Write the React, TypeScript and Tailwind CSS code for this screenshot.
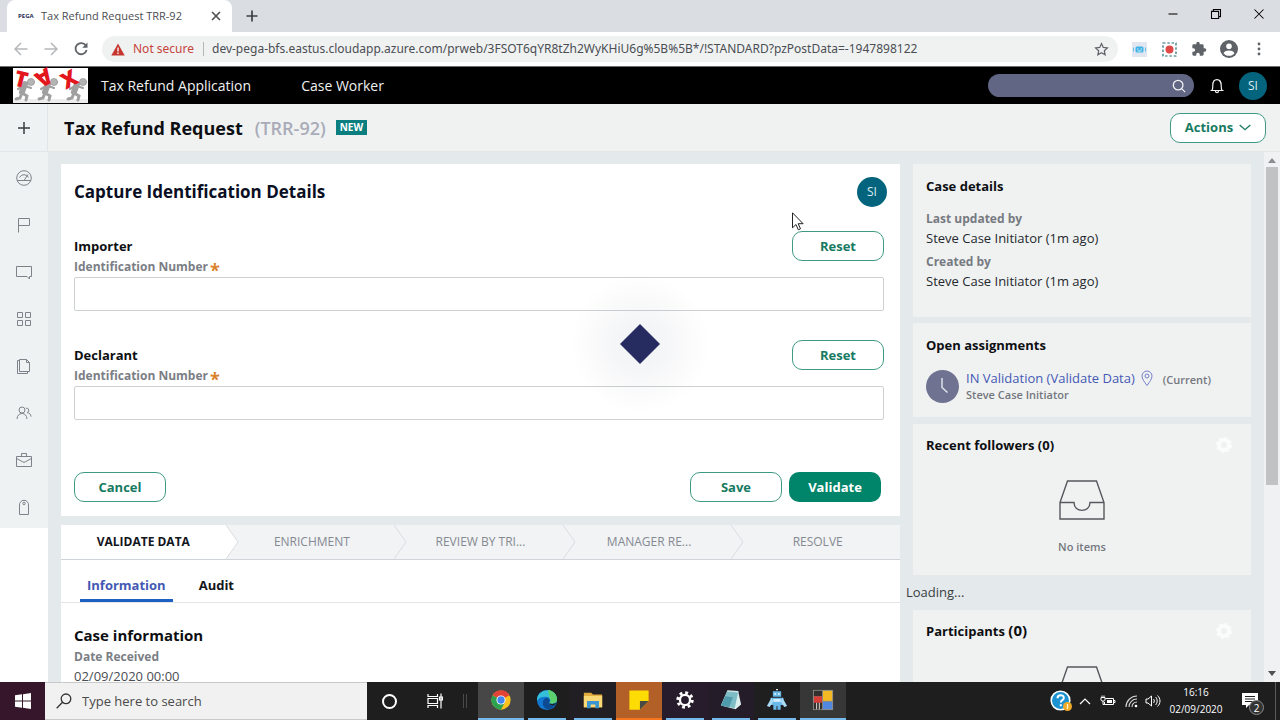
import { useState } from "react";
import type { ReactNode } from "react";

const outlineButton =
  "h-[30px] w-[92px] rounded-[10px] border border-[#3f9a83] bg-white text-[13px] font-bold text-[#177a62]";

interface IconProps {
  size?: number;
  className?: string;
  children: ReactNode;
}

function LineIcon({ size = 16, className, children }: IconProps) {
  return (
    <svg
      width={size}
      height={size}
      viewBox="0 0 16 16"
      fill="none"
      stroke="currentColor"
      strokeWidth="1"
      className={className}
      aria-hidden="true"
    >
      {children}
    </svg>
  );
}

function TabStrip() {
  return (
    <div className="flex h-8 shrink-0 bg-[#dadde2] pl-[7px]">
      <div className="flex w-[225px] items-center rounded-t-lg bg-white pr-2 pl-[11px] text-[#4a4d51]">
        <span className="w-[23px] text-[6px] font-bold text-[#2a2a55]">PEGA</span>
        <span className="flex-1 text-[11px] whitespace-nowrap">Tax Refund Request TRR-92</span>
        <button type="button" aria-label="Close tab" className="flex size-4 items-center justify-center">
          <LineIcon size={14}>
            <path d="M3.5 3.5l9 9M12.500 3.500l-9 9" strokeWidth="1.8" />
          </LineIcon>
        </button>
      </div>
      <button type="button" aria-label="New tab" className="flex w-10 items-center justify-center text-[#3c4043]">
        <LineIcon size={16}>
          <path d="M8 2.500v11M2.500 8h11" strokeWidth="1.7" />
        </LineIcon>
      </button>
      <div className="ml-auto flex pb-1 text-black">
        <button type="button" aria-label="Minimize" className="flex w-[43px] items-center justify-center">
          <LineIcon size={12}>
            <path d="M2 8h12" strokeWidth="1.400" />
          </LineIcon>
        </button>
        <button type="button" aria-label="Restore" className="flex w-[43px] items-center justify-center">
          <LineIcon size={12}>
            <path d="M2 4.500h9.500V14H2zM4.500 4.500V2H14v9.500h-2.500" strokeWidth="1.400" />
          </LineIcon>
        </button>
        <button type="button" aria-label="Close" className="flex w-[43px] items-center justify-center">
          <LineIcon size={12}>
            <path d="M2 2l12 12M14 2L2 14" strokeWidth="1.400" />
          </LineIcon>
        </button>
      </div>
    </div>
  );
}

function AddressBar() {
  return (
    <div className="flex h-[34px] shrink-0 items-center bg-white pr-[6px] pl-[6px] text-[#5f6368]">
      <button type="button" aria-label="Back" className="flex w-[30px] justify-center text-[#b5b8bb]">
        <LineIcon size={16}>
          <path d="M14.500 8H2M8 2L2 8l6 6" strokeWidth="1.500" />
        </LineIcon>
      </button>
      <button type="button" aria-label="Forward" className="flex w-[30px] justify-center text-[#b5b8bb]">
        <LineIcon size={16}>
          <path d="M1.500 8H14M8 2l6 6-6 6" strokeWidth="1.500" />
        </LineIcon>
      </button>
      <button type="button" aria-label="Reload" className="flex w-[30px] justify-center">
        <LineIcon size={16}>
          <path d="M12.800 4.500A5.600 5.600 0 1 0 13.600 9" strokeWidth="1.800" />
          <path d="M14.500 1.500v5.200H9.300z" fill="currentColor" stroke="none" />
        </LineIcon>
      </button>
      <div className="ml-[6px] flex h-[26px] flex-1 items-center rounded-full bg-[#f0f2f2] pr-[9px] pl-[9px] font-['Noto_Sans',sans-serif] text-[12px]">
        <svg width="14" height="13" viewBox="0 0 14 13" aria-hidden="true">
          <path d="M7 .5L13.700 12.500H.3z" fill="#c5362f" />
          <path d="M7 4.500v4M7 9.600v1.500" stroke="#fff" strokeWidth="1.300" />
        </svg>
        <span className="ml-2 w-[62px] whitespace-nowrap text-[#c5443d]">Not secure</span>
        <span className="mx-[8px] h-[14px] w-px bg-[#b4b7ba]" />
        <input
          aria-label="Address"
          className="min-w-0 flex-1 bg-transparent text-[#4b4e52] outline-none"
          defaultValue="dev-pega-bfs.eastus.cloudapp.azure.com/prweb/3FSOT6qYR8tZh2WyKHiU6g%5B%5B*/!STANDARD?pzPostData=-1947898122"
        />
        <button type="button" aria-label="Bookmark this page">
          <LineIcon size={15}>
            <path d="M8 1.700l1.900 4.100 4.400.5-3.300 3 .9 4.400L8 11.500l-3.900 2.200.9-4.400-3.300-3 4.400-.5z" strokeWidth="1.300" />
          </LineIcon>
        </button>
      </div>
      <div className="ml-[6px] flex">
        <span className="flex w-[30px] items-center justify-center">
          <svg width="15" height="15" viewBox="0 0 15 15" aria-hidden="true">
            <rect width="15" height="15" fill="#e2e6f1" />
            <rect x="3.500" y="4.500" width="8" height="6" rx="1.500" fill="#3fb2e8" />
            <path d="M1.500 5.500v4M13.500 5.500v4" stroke="#68bfe8" />
            <path d="M5 7h1.500M8.500 7H10M5.500 9h4" stroke="#fff" strokeWidth=".8" />
          </svg>
        </span>
        <span className="flex w-[30px] items-center justify-center">
          <svg width="15" height="15" viewBox="0 0 15 15" aria-hidden="true">
            <rect x="1" y="1" width="13" height="13" fill="none" stroke="#256b78" strokeWidth="1.200" strokeDasharray="2.500 1.800" />
            <circle cx="7.500" cy="7.500" r="4" fill="#e04848" />
          </svg>
        </span>
        <span className="flex w-[30px] items-center justify-center">
          <svg width="16" height="16" viewBox="0 0 24 24" fill="currentColor" aria-hidden="true">
            <path d="M20.500 11H19V7a2 2 0 0 0-2-2h-4V3.500a2.500 2.500 0 0 0-5 0V5H4a2 2 0 0 0-2 2v3.800h1.500a2.700 2.700 0 0 1 0 5.400H2V20a2 2 0 0 0 2 2h3.800v-1.500a2.700 2.700 0 0 1 5.400 0V22H17a2 2 0 0 0 2-2v-4h1.500a2.500 2.500 0 0 0 0-5z" />
          </svg>
        </span>
        <span className="flex w-[30px] items-center justify-center">
          <svg width="20" height="20" viewBox="0 0 20 20" aria-hidden="true">
            <circle cx="10" cy="10" r="9" fill="#5f6368" />
            <circle cx="10" cy="7.300" r="2.800" fill="#fff" />
            <path d="M4.500 14.200c1-2 3.200-2.700 5.500-2.700s4.500.7 5.500 2.700c-1.300 1.700-3.200 2.600-5.500 2.600s-4.200-.9-5.500-2.600z" fill="#fff" />
          </svg>
        </span>
        <button type="button" aria-label="Browser menu" className="flex w-[30px] items-center justify-center">
          <svg width="4" height="14" viewBox="0 0 4 14" fill="currentColor" aria-hidden="true">
            <circle cx="2" cy="2" r="1.400" />
            <circle cx="2" cy="7" r="1.400" />
            <circle cx="2" cy="12" r="1.400" />
          </svg>
        </button>
      </div>
    </div>
  );
}

function Runner({ x }: { x: number }) {
  return (
    <g transform={`translate(${x} 0)`} stroke="#a0a0a0" strokeLinecap="round" fill="none">
      <path d="M11 16l-3 8" strokeWidth="6" />
      <path d="M8 25l5 3-1 4M8 25l-2 5-4 1" strokeWidth="3" />
      <path d="M11 18l6 2M9 18l-5 3" strokeWidth="2.200" />
      <circle cx="17" cy="14" r="3.600" fill="#b4b4b4" stroke="#8d8d8d" strokeWidth=".6" />
    </g>
  );
}

function TaxLogo() {
  return (
    <svg width="75" height="35" viewBox="0 0 75 35" className="overflow-visible bg-white" role="img" aria-label="Tax logo">
      <rect y="31" width="75" height="4" fill="#ededed" />
      <Runner x={1} />
      <Runner x={24} />
      <Runner x={53} />
      <g fill="#e3151d" fontWeight="900" fontFamily="Open Sans, sans-serif" fontSize="22" textAnchor="middle">
        <text transform="rotate(14 8 12)" x="8" y="19">T</text>
        <text transform="rotate(150 31 10)" x="31" y="18">A</text>
        <text transform="rotate(-28 56 11)" x="56" y="19">X</text>
      </g>
    </svg>
  );
}

function Avatar({ className = "size-[30px]" }: { className?: string }) {
  return (
    <span
      className={`flex shrink-0 items-center justify-center rounded-full bg-[#04647d] text-[12px] text-[#dcecef] ${className}`}
    >
      SI
    </span>
  );
}

function PortalHeader() {
  return (
    <header className="flex h-[38px] shrink-0 items-center border-t border-[#6b6d6e] bg-black pr-[13px] pl-[13px] text-[#f0f0f0]">
      <TaxLogo />
      <a href="#home" className="ml-[13px] whitespace-nowrap">Tax Refund Application</a>
      <a href="#worker" className="ml-[50px] whitespace-nowrap">Case Worker</a>
      <div className="ml-auto flex h-[23px] w-[206px] items-center rounded-full bg-[#626685] pr-2 pl-3">
        <input type="search" aria-label="Search" className="min-w-0 flex-1 bg-transparent outline-none" />
        <LineIcon size={14}>
          <circle cx="7" cy="7" r="5.500" strokeWidth="1.500" />
          <path d="M11 11l4 4" strokeWidth="1.500" />
        </LineIcon>
      </div>
      <button type="button" aria-label="Notifications" className="flex w-[45px] justify-center">
        <LineIcon size={16}>
          <path d="M1.500 12.500h13M3 12.500c.7-1 .8-2.500.8-5C3.800 4 5.500 1.700 8 1.700S12.200 4 12.200 7.500c0 2.500.1 4 .8 5M6.500 13c0 2.300 3 2.300 3 0" strokeWidth="1.200" />
        </LineIcon>
      </button>
      <Avatar className="size-7" />
    </header>
  );
}

const navItems = [
  {
    name: "Dashboard",
    icon: (
      <>
        <circle cx="8" cy="8" r="7.300" />
        <path d="M1.200 10.500h13.600M8 10.500L12 4.500M3.500 7.500a5 5 0 0 1 9 0" />
      </>
    ),
  },
  { name: "My work", icon: <path d="M2.500 15.500V1.500h11v7h-11" /> },
  { name: "Messages", icon: <path d="M.5 2.500h15v10h-2V15L11 12.500H.5z" /> },
  { name: "Spaces", icon: <path d="M1.500 1.500h5v5h-5zM9.500 1.500h5v5h-5zM1.500 9.500h5v5h-5zM9.500 9.500h5v5h-5z" /> },
  { name: "Documents", icon: <path d="M3.500 1.500h7l3 3v9h-10zM10.500 1.500v3h3M3.500 2.500h-2v13h10v-2" /> },
  {
    name: "People",
    icon: (
      <>
        <circle cx="6" cy="5" r="3" />
        <path d="M1 14c.3-3.500 2-5.500 5-5.500s4.700 2 5 5.500M10 3.200a2.300 2.300 0 1 1 1 4.500c2.500 0 3.700 1.500 4 4" />
      </>
    ),
  },
  { name: "Cases", icon: <path d="M.5 4.500h15v10H.5zM5.500 4.500v-3h5v3M.5 6.500L8 10.500l7.500-4" /> },
  {
    name: "Tags",
    icon: (
      <>
        <path d="M3.500 4.500L6 1.500h4l2.500 3v11h-9z" />
        <circle cx="8" cy="4.500" r="1.200" />
      </>
    ),
  },
];

function Sidebar() {
  return (
    <nav className="w-12 shrink-0 bg-white">
      <div className="bg-[#eff2f2] text-[#7d838b]">
        <button
          type="button"
          aria-label="Create"
          className="flex h-12 w-full items-center justify-center border-r border-b border-[#e2e6e8] text-[#3a3f46]"
        >
          <LineIcon size={16}>
            <path d="M8 2v12M2 8h12" strokeWidth="1.500" />
          </LineIcon>
        </button>
        <ul>
          {navItems.map((item) => (
            <li key={item.name}>
              <a href="#nav" aria-label={item.name} className="flex h-[47px] items-center justify-center pt-1">
                <LineIcon>{item.icon}</LineIcon>
              </a>
            </li>
          ))}
        </ul>
      </div>
    </nav>
  );
}

function CaseHeader() {
  return (
    <div className="flex h-12 shrink-0 items-center border-b border-[#e2e6e8] bg-[#f0f2f2] pr-[14px] pl-4">
      <h1 className="text-lg font-bold whitespace-nowrap">Tax Refund Request</h1>
      <span className="ml-3 text-lg font-semibold text-[#a9abb8]">(TRR-92)</span>
      <span className="ml-[10px] flex h-[15px] items-center bg-[#0b7f80] px-1 text-[10px] font-bold text-white">NEW</span>
      <button
        type="button"
        className="ml-auto flex h-[30px] w-[96px] items-center justify-center gap-[6px] rounded-[10px] border border-[#3f9a83] bg-white text-[13px] font-bold text-[#177a62]"
      >
        Actions
        <svg width="12" height="7" viewBox="0 0 12 7" fill="none" stroke="currentColor" strokeWidth="1.300" aria-hidden="true">
          <path d="M.7 1L6 5.700 11.300 1" />
        </svg>
      </button>
    </div>
  );
}

function IdentificationField({ title, id }: { title: string; id: string }) {
  const [value, setValue] = useState("");

  return (
    <div className="pr-[3px]">
      <div className="flex h-[30px] items-center justify-between">
        <h3 className="text-[13px] font-bold">{title}</h3>
        <button type="button" className={outlineButton} onClick={() => setValue("")}>
          Reset
        </button>
      </div>
      <label htmlFor={id} className="mb-1 flex h-3 items-center gap-[2px] text-[12px] font-bold text-[#7b7e85]">
        Identification Number
        <span className="pt-[6px] text-lg leading-none text-[#d9822b]">*</span>
      </label>
      <input
        id={id}
        value={value}
        onChange={(e) => setValue(e.target.value)}
        className="block h-[34px] w-full rounded-[2px] border border-[#cdd1d4] bg-white px-2 outline-none"
      />
    </div>
  );
}

function CaptureForm() {
  return (
    <form className="bg-white px-[13px] pt-[13px] pb-[14px]">
      <div className="flex items-center justify-between">
        <h2 className="text-[17px] leading-7 font-bold text-[#0a0f24]">Capture Identification Details</h2>
        <Avatar />
      </div>
      <div className="mt-6 flex flex-col gap-[29px]">
        <IdentificationField title="Importer" id="importer-id" />
        <IdentificationField title="Declarant" id="declarant-id" />
      </div>
      <div className="mt-[52px] flex gap-[7px] pr-[6px]">
        <button type="button" className={outlineButton}>
          Cancel
        </button>
        <button type="button" className={`ml-auto ${outlineButton}`}>
          Save
        </button>
        <button type="button" className="h-[30px] w-[92px] rounded-[10px] bg-[#00856a] text-[13px] font-bold text-white">
          Validate
        </button>
      </div>
    </form>
  );
}

const stages = ["VALIDATE DATA", "ENRICHMENT", "REVIEW BY TRI...", "MANAGER RE...", "RESOLVE"];

function StageBar() {
  return (
    <ol className="flex h-[35px] border-b border-[#cfd4da] bg-[#f1f3f4] text-[12px]">
      {stages.map((stage, index) => (
        <li
          key={stage}
          className={`relative flex flex-1 items-center justify-center ${
            index === 0 ? "bg-white font-bold text-[#12151c]" : "pl-1 text-[#858992]"
          }`}
        >
          {stage}
          {index < stages.length - 1 && (
            <svg width="13" height="34" viewBox="0 0 13 34" className="absolute top-0 -right-[13px]" aria-hidden="true">
              <path d="M0 0l12 17L0 34z" fill={index === 0 ? "#ffffff" : "#f1f3f4"} />
              <path d="M0 0l12 17L0 34" fill="none" stroke="#d9dde0" />
            </svg>
          )}
        </li>
      ))}
    </ol>
  );
}

function CaseTabs() {
  const [tab, setTab] = useState("Information");

  return (
    <section className="bg-white">
      <StageBar />
      <div role="tablist" className="flex h-[43px] items-end gap-[19px] border-b border-[#e3e6e9] pl-[19px]">
        {["Information", "Audit"].map((name) => (
          <button
            key={name}
            type="button"
            role="tab"
            aria-selected={tab === name}
            onClick={() => setTab(name)}
            className={`h-[31px] border-b-[3px] px-[7px] text-[13px] font-bold ${
              tab === name ? "border-[#1d60c4] text-[#4459b4]" : "border-transparent text-[#14161a]"
            }`}
          >
            {name}
          </button>
        ))}
      </div>
      <div className="px-[13px] pt-[22px]">
        <h2 className="text-[15px] leading-5 font-bold">Case information</h2>
        <dl>
          <dt className="pt-[2px] text-[12px] leading-5 font-bold text-[#7b7e85]">Date Received</dt>
          <dd className="text-[13px] leading-[18px] text-[#4a4d52]">02/09/2020 00:00</dd>
        </dl>
      </div>
    </section>
  );
}

function EmptyInbox() {
  return (
    <svg width="46" height="40" viewBox="0 0 46 40" fill="none" stroke="#55585c" strokeWidth="1.400" aria-hidden="true">
      <path d="M1 22.500L8.500 1h29L45 22.500V39H1zM1 22.500h14c0 10.500 16 10.500 16 0h14" />
    </svg>
  );
}

interface FollowerCardProps {
  title: string;
  className: string;
  countClassName?: string;
}

function FollowerCard({ title, className, countClassName }: FollowerCardProps) {
  return (
    <section className={`ml-[7px] h-[151px] bg-[#f0f2f2] px-[13px] pt-[11px] ${className}`}>
      <div className="flex h-5 items-center justify-between pr-[6px]">
        <h3 className="text-[13px] font-bold">
          {title} <span className={countClassName}>(0)</span>
        </h3>
        <button type="button" aria-label={`Configure ${title}`} className="text-[#fafbfb]">
          <svg width="16" height="16" viewBox="0 0 16 16" fill="none" stroke="currentColor" aria-hidden="true">
            <circle cx="8" cy="8" r="5" strokeWidth="4" />
            <circle cx="8" cy="8" r="7" strokeWidth="2" strokeDasharray="3 2.500" />
          </svg>
        </button>
      </div>
      <div className="flex flex-col items-center pt-[25px]">
        <EmptyInbox />
        <p className="mt-[19px] text-[11px] leading-4 font-semibold text-[#74777d]">No items</p>
      </div>
    </section>
  );
}

function UtilityColumn() {
  return (
    <aside className="w-[345px] shrink-0 text-[13px]">
      <section className="ml-[7px] h-[153px] bg-[#f0f2f2] px-[13px] pt-3">
        <h3 className="leading-5 font-bold">Case details</h3>
        <dl className="pt-3">
          <dt className="text-[12px] leading-[22px] font-bold text-[#777a81]">Last updated by</dt>
          <dd className="leading-4 text-[#25282d]">Steve Case Initiator (1m ago)</dd>
          <dt className="pt-[5px] text-[12px] leading-[22px] font-bold text-[#777a81]">Created by</dt>
          <dd className="leading-4 text-[#25282d]">Steve Case Initiator (1m ago)</dd>
        </dl>
      </section>

      <section className="mt-[6px] ml-[7px] h-[94px] bg-[#f0f2f2] px-[13px] pt-3">
        <h3 className="leading-5 font-bold">Open assignments</h3>
        <div className="flex items-center gap-[7px] pt-[14px]">
          <svg width="33" height="33" viewBox="0 0 33 33" fill="none" aria-hidden="true">
            <circle cx="16.500" cy="16.500" r="16.500" fill="#6f7391" />
            <path d="M16 8v9.500l5.500 5" stroke="#e6e7ee" strokeWidth="1.400" />
          </svg>
          <div>
            <div className="flex items-center">
              <a href="#assignment" className="leading-[18px] whitespace-nowrap text-[#4459b4]">
                IN Validation (Validate Data)
              </a>
              <LineIcon className="ml-1 text-[#7580c8]">
                <path d="M8 15.500C5 11.500 3 8.700 3 6a5 5 0 0 1 10 0c0 2.700-2 5.500-5 9.500z" />
                <circle cx="8" cy="6" r="2" />
              </LineIcon>
              <span className="ml-2 pt-1 text-[11px] leading-[14px] font-semibold text-[#74777d]">(Current)</span>
            </div>
            <p className="text-[11px] leading-4 font-semibold text-[#74777d]">Steve Case Initiator</p>
          </div>
        </div>
      </section>

      <FollowerCard title="Recent followers" className="mt-[7px]" />
      <p className="h-[35px] pt-[7px] leading-5 text-[#3a3e43]">Loading...</p>
      <FollowerCard title="Participants" className="" countClassName="text-[15px]" />
    </aside>
  );
}

function ScrollTrack() {
  return (
    <div className="flex w-4 shrink-0 flex-col items-center bg-[#f0f1f2] py-[6px]" aria-hidden="true">
      <svg width="8" height="5" viewBox="0 0 8 5">
        <path d="M0 5l4-5 4 5z" fill="#8b8d90" />
      </svg>
      <div className="mt-1 h-[318px] w-3 bg-[#c1c2c3]" />
      <svg width="8" height="5" viewBox="0 0 8 5" className="mt-auto">
        <path d="M0 0l4 5 4-5z" fill="#505050" />
      </svg>
    </div>
  );
}

const taskbarApps = [
  {
    name: "Chrome",
    tile: "bg-[#474747]",
    bar: "w-full bg-[#76b9ed]",
    icon: (
      <>
        <circle cx="12" cy="12" r="10.500" fill="#fbc11d" />
        <path d="M12 12L2.900 6.750A10.500 10.500 0 0 1 21.100 6.750z" fill="#e24336" />
        <path d="M12 12L2.900 6.750A10.500 10.500 0 0 0 12 22.500L16.500 14z" fill="#2da14f" />
        <circle cx="12" cy="12" r="5" fill="#fff" />
        <circle cx="12" cy="12" r="4" fill="#4386f0" />
      </>
    ),
  },
  {
    name: "Edge",
    tile: "bg-[#1e1e1f]",
    bar: "w-[38px] bg-[#76b9ed]",
    icon: (
      <>
        <circle cx="12" cy="12" r="11" fill="#1277d1" />
        <path d="M1.200 10C3 0 20-3 22.900 10c.6 5-4 6.500-8.400 5.500 2.500-3 .5-7-4-7C6 8.500 3 9.500 1.200 13z" fill="#35bfd8" />
        <path d="M13 1c6 .5 10 5 10 10.500 0 4-4.500 5-8.500 4 1.800-2 1.500-4 .5-5.500z" fill="#5bd06d" />
        <path d="M7.500 15.500c0-3 1.500-5.500 4-6 2 0 3.500 1.500 3.500 3.500-1 1-1.500 3 1 4 2 .8 4 .3 5.500-1-2 4.500-6 6.500-8.500 6-3-.5-5.500-3-5.500-6.500z" fill="#0c4a92" />
        <path d="M14.500 15.500c2.500 1.500 6 1 8-1l-1.500 2.300c-2.500 1.200-6 1-6.500-1.300z" fill="#1e1e1f" />
      </>
    ),
  },
  {
    name: "File Explorer",
    tile: "bg-[#211e24]",
    bar: "w-[38px] bg-[#76b9ed]",
    icon: (
      <>
        <path d="M2 4h8l2 2h10v14H2z" fill="#e0a93b" />
        <path d="M2 7.500h20V20H2z" fill="#fbd876" />
        <path d="M5.500 13h13v8h-4v-4h-5v4h-4z" fill="#3a94d2" />
      </>
    ),
  },
  {
    name: "Sticky Notes",
    tile: "bg-[#b25f28]",
    bar: "w-full bg-[#f7751c]",
    icon: (
      <>
        <path d="M1.500 1.500h21v11.500l-9.500 9.500H1.500z" fill="#fddb05" />
        <path d="M13 22.500V13h9.500z" fill="#4a4a45" />
      </>
    ),
  },
  {
    name: "Settings",
    tile: "bg-[#271c2c]",
    bar: "w-[38px] bg-[#76b9ed]",
    icon: (
      <>
        <circle cx="12" cy="12" r="5.500" fill="none" stroke="#fff" strokeWidth="2.500" />
        <circle cx="12" cy="12" r="8" fill="none" stroke="#fff" strokeWidth="3" strokeDasharray="3.140 3.140" />
      </>
    ),
  },
  {
    name: "Notepad",
    tile: "bg-[#241c29]",
    bar: "w-[38px] bg-[#76b9ed]",
    icon: (
      <>
        <path d="M8 2l12 1 3 14-6 5-16-4z" fill="#dceeee" />
        <path d="M8 2l12 1-4 18L1 18z" fill="#7fbdc6" />
        <path d="M6 8l8 1-4 11-9-2z" fill="#4f9bab" />
        <path d="M8 2l12 1" stroke="#d5e9ea" strokeWidth="1.500" />
      </>
    ),
  },
  {
    name: "Robot",
    tile: "bg-[#1f1f20]",
    bar: "w-[38px] bg-[#76b9ed]",
    icon: (
      <>
        <path d="M7.500 2.500h9v6h-9zM5 9.500h14v8h-3v5h-3.500v-4h-1v4H8v-5H5z" fill="#69b9e9" />
        <path d="M6 9.500l-5 9 3 1 4-6zM18 9.500l5 9-3 1-4-6z" fill="#a9dbf5" />
        <path d="M9 5.500h2M13 5.500h2M11 .5h2" stroke="#e8f7ff" strokeWidth="1.500" />
        <path d="M8 11h8v3H8z" fill="#d8f0fc" />
      </>
    ),
  },
  {
    name: "Media tools",
    tile: "bg-[#363736]",
    bar: "w-full bg-[#76b9ed]",
    icon: (
      <>
        <path d="M1 1h22v22H1z" fill="#8b8b86" />
        <path d="M2 2h9v6H2zM2 14h9v8H2z" fill="#33302e" />
        <path d="M2 8h9v7H2z" fill="#d63e37" />
        <path d="M12 2h10v11H12z" fill="#f4b824" />
        <path d="M12 14h10v8H12z" fill="#5287e0" />
        <path d="M5 15v7M8 15v7" stroke="#e9e4df" />
      </>
    ),
  },
];

function Taskbar() {
  return (
    <footer className="flex h-[38px] shrink-0 bg-[#1e1e1f] text-white">
      <button type="button" aria-label="Start" className="flex w-[45px] items-center justify-center bg-[#35162b]">
        <svg width="16" height="16" viewBox="0 0 16 16" fill="#fff" aria-hidden="true">
          <path d="M0 2.300l7-1v6.200H0zM8 1.200L16 0v7.500H8zM0 8.500h7v6.200l-7-1zM8 8.500h8V16l-8-1.200z" />
        </svg>
      </button>
      <label className="flex w-[322px] items-center gap-[10px] border-y border-[#c9c9c9] bg-[#f1f1f1] pl-[11px] text-[#444]">
        <svg width="16" height="16" viewBox="0 0 16 16" fill="none" stroke="#333" strokeWidth="1.300" aria-hidden="true">
          <circle cx="10" cy="5.800" r="4.800" />
          <path d="M6.500 9.300L.7 15.200" />
        </svg>
        <input
          aria-label="Search Windows"
          placeholder="Type here to search"
          className="min-w-0 flex-1 bg-transparent text-[13px] outline-none placeholder:text-[#4a4a4a]"
        />
      </label>
      <button type="button" aria-label="Cortana" className="flex w-[45px] items-center justify-center">
        <span className="size-[15px] rounded-full border-2 border-white" />
      </button>
      <button type="button" aria-label="Task view" className="flex w-[45px] items-center justify-center">
        <LineIcon>
          <path d="M1 1v2.500h9.500V1M1 5.500h9.500v5H1zM1 15v-2.500h9.500V15M14 .5v15M12.500 4h3v3h-3z" strokeWidth="1.200" />
        </LineIcon>
      </button>
      <span className="mx-[6px] my-3 w-[4px] border-x border-[#4a4a4a]" />
      <div className="ml-[5px] flex">
        {taskbarApps.map((app) => (
          <button
            key={app.name}
            type="button"
            aria-label={app.name}
            className={`flex w-[46px] flex-col items-center ${app.tile}`}
          >
            <span className="flex flex-1 items-center">
              <svg width="22" height="22" viewBox="0 0 24 24" aria-hidden="true">
                {app.icon}
              </svg>
            </span>
            <span className={`h-[2px] ${app.bar}`} />
          </button>
        ))}
      </div>

      <div className="ml-auto flex items-center">
        <span className="flex w-[26px] justify-center">
          <svg width="22" height="22" viewBox="0 0 22 22" aria-hidden="true">
            <circle cx="10.500" cy="10.500" r="9.300" fill="#1c93d0" stroke="#fff" strokeWidth="1.600" />
            <path d="M7.500 8.200c0-4 6.300-4 6.300-.3 0 2.300-3 2.200-3 4.700M10.800 14.300v2" fill="none" stroke="#fff" strokeWidth="2" />
            <circle cx="17.500" cy="16.500" r="4.500" fill="#efab28" />
            <path d="M17.500 14v5" stroke="#fff3d0" strokeWidth="1.300" />
          </svg>
        </span>
        <span className="flex w-[22px] justify-center">
          <svg width="12" height="7" viewBox="0 0 12 7" fill="none" stroke="#fff" strokeWidth="1.200" aria-hidden="true">
            <path d="M1 6l5-5 5 5" />
          </svg>
        </span>
        <span className="flex w-6 justify-center">
          <svg width="16" height="12" viewBox="0 0 16 12" fill="none" stroke="#fff" aria-hidden="true">
            <path d="M5.500 3.500h8v6h-9V7M13.500 5.500h1.500v2h-1.500" />
            <path d="M7 5h5v3H7z" fill="#fff" stroke="none" />
            <path d="M1 2.500h4V5c0 1.500-4 1.500-4 0zM2 .5v2M4 .5v2M3 6v3.500h1.500" />
          </svg>
        </span>
        <span className="flex w-[22px] justify-center">
          <svg width="13" height="13" viewBox="0 0 13 13" fill="none" stroke="#d5d5d5" strokeWidth="1.100" aria-hidden="true">
            <path d="M1 12C1 6 6 1 12 1M4 12c0-4.500 3.500-8 8-8M7 12c0-3 2-5 5-5" />
            <circle cx="11" cy="11" r="1.300" fill="#fff" stroke="none" />
          </svg>
        </span>
        <span className="flex w-[22px] justify-center">
          <svg width="16" height="14" viewBox="0 0 16 14" fill="none" stroke="#fff" aria-hidden="true">
            <path d="M1 5h2l3.500-3v10L3 9H1zM8.500 5c1 1 1 3 0 4M10.500 3c2.200 2 2.200 6 0 8M12.500 1.500c3.300 3 3.300 8 0 11" />
          </svg>
        </span>
        <div className="w-16 text-center text-[10px] leading-[17px] whitespace-nowrap">
          <div>16:16</div>
          <div>02/09/2020</div>
        </div>
        <button type="button" aria-label="Notification center" className="relative flex w-[47px] justify-center pr-1">
          <svg width="16" height="16" viewBox="0 0 16 16" aria-hidden="true">
            <path d="M0 0h16v12H7l-3 3v-3H0z" fill="#fff" />
            <path d="M3 3.500h10M3 6h10M3 8.500h10" stroke="#1e1e1f" />
          </svg>
          <span className="absolute top-[7px] right-[11px] flex size-[15px] items-center justify-center rounded-full border border-[#8a8a8a] bg-[#333] text-[10px] leading-3">
            2
          </span>
        </button>
        <span className="h-[38px] w-[5px] border-l border-[#5a5a5a]" />
      </div>
    </footer>
  );
}

export default function App() {
  return (
    <div className="relative flex h-screen flex-col overflow-hidden bg-white font-['Open_Sans','Noto_Sans',sans-serif] text-sm text-[#0d0f12]">
      <TabStrip />
      <AddressBar />
      <PortalHeader />
      <div className="flex min-h-0 flex-1 overflow-hidden">
        <Sidebar />
        <div className="flex min-w-0 flex-1 flex-col">
          <CaseHeader />
          <div className="flex min-h-0 flex-1 bg-[#e4e9ec]">
            <main className="flex min-w-0 flex-1 gap-[6px] overflow-hidden pt-3 pr-[13px] pl-[13px]">
              <div className="flex min-w-0 flex-1 flex-col gap-[9px]">
                <CaptureForm />
                <div className="flex-1 bg-white">
                  <CaseTabs />
                </div>
              </div>
              <UtilityColumn />
            </main>
            <ScrollTrack />
          </div>
        </div>
      </div>
      <Taskbar />

      {/* Busy indicator */}
      <div className="pointer-events-none absolute top-[274px] left-1/2 -ml-[70px] flex size-[140px] items-center justify-center bg-radial from-[#3c466414] to-transparent to-70%">
        <svg width="40" height="40" viewBox="0 0 40 40" aria-hidden="true">
          <path d="M20 0l20 20-20 20L0 20z" fill="#262c60" />
        </svg>
      </div>

      {/* Mouse pointer */}
      <svg
        width="12"
        height="19"
        viewBox="0 0 12 19"
        className="pointer-events-none absolute top-[212px] left-[792px]"
        aria-hidden="true"
      >
        <path d="M.5.800v15l3.500-3.300 2.300 5.300 2.200-1-2.300-5.100h4.900z" fill="#fff" stroke="#222" />
      </svg>
    </div>
  );
}
